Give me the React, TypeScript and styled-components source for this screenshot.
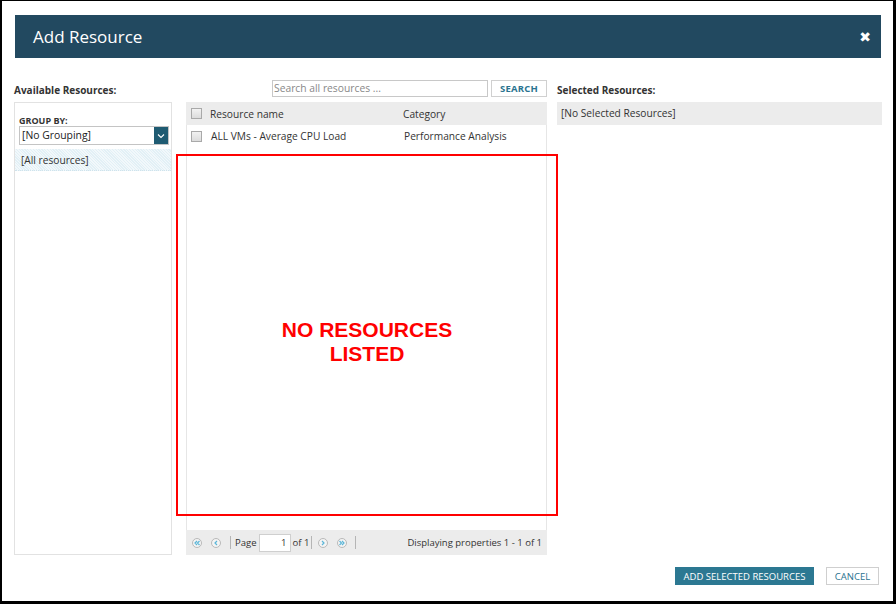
import React from "react";
import styled, { createGlobalStyle } from "styled-components";

const Global = createGlobalStyle`
  html, body { margin: 0; padding: 0; background: #fff; }
  body { font-family: "Open Sans", "Noto Sans", sans-serif; color: #333; }
  * { box-sizing: border-box; }
`;

const Frame = styled.div`
  position: relative;
  width: 896px;
  height: 604px;
  border-style: solid;
  border-color: #000;
  border-width: 1px 3px 3px 2px;
  background: #fff;
  display: flex;
  flex-direction: column;
`;

const Header = styled.div`
  margin: 14px 12px 0 13px;
  height: 43px;
  background: #224960;
  display: flex;
  align-items: center;
  justify-content: space-between;
  padding: 0 10px 0 18px;
`;

const Title = styled.div`
  color: #fff;
  font-size: 17px;
  font-weight: 400;
`;

const Close = styled.div`
  color: #fff;
  font-family: "DejaVu Sans", sans-serif;
  font-size: 14px;
  font-weight: bold;
`;

const Body = styled.div`
  display: flex;
  padding: 22px 0 0 12px;
  gap: 10px;
`;

const LeftCol = styled.div`
  width: 533px;
  display: flex;
  flex-direction: column;
  gap: 5px;
`;

const RightCol = styled.div`
  width: 325px;
  display: flex;
  flex-direction: column;
  gap: 5px;
`;

const TopRow = styled.div`
  height: 17px;
  display: flex;
  align-items: center;
  gap: 3px;
`;

const Label = styled.div`
  font-size: 10px;
  font-weight: 700;
  color: #333;
  padding-top: 3px;
  flex: 1;
`;

const SearchInput = styled.div`
  width: 216px;
  height: 17px;
  border: 1px solid #c8c8c8;
  font-size: 10.3px;
  color: #888;
  padding: 0 0 0 1px;
  line-height: 15px;
`;

const SearchButton = styled.div`
  width: 56px;
  height: 17px;
  border: 1px solid #d0d0d0;
  color: #2a7390;
  font-size: 9.5px;
  font-weight: 700;
  display: flex;
  align-items: center;
  justify-content: center;
  letter-spacing: 0.2px;
`;

const Panels = styled.div`
  display: flex;
  gap: 14px;
  height: 453px;
`;

const GroupPanel = styled.div`
  width: 158px;
  border: 1px solid #e2e2e2;
  display: flex;
  flex-direction: column;
`;

const GroupLabel = styled.div`
  font-size: 9px;
  line-height: 11px;
  font-weight: 700;
  color: #333;
  margin: 12px 0 0 4px;
`;

const Select = styled.div`
  margin: 0 0 0 4px;
  width: 150px;
  height: 19px;
  border: 1px solid #c4c4c4;
  display: flex;
  align-items: stretch;
`;

const SelectText = styled.div`
  flex: 1;
  font-size: 10.4px;
  line-height: 17px;
  padding-left: 2px;
  color: #222;
`;

const SelectArrow = styled.div`
  width: 14px;
  background: #1f5b72;
  display: flex;
  align-items: center;
  justify-content: center;
`;

const GroupItem = styled.div`
  margin-top: 4px;
  height: 22px;
  background-color: #e2f0f6;
  background-image: repeating-linear-gradient(
    45deg,
    rgba(255, 255, 255, 0.55) 0px,
    rgba(255, 255, 255, 0.55) 1px,
    transparent 1px,
    transparent 2px
  );
  border-bottom: 1px dotted #cfe3ec;
  font-size: 10.2px;
  color: #333;
  padding-left: 6px;
  line-height: 22px;
`;

const Grid = styled.div`
  width: 361px;
  display: flex;
  flex-direction: column;
`;

const GridHead = styled.div`
  height: 23px;
  background: #ececec;
  display: flex;
  align-items: center;
`;

const GridRow = styled.div`
  height: 22px;
  display: flex;
  align-items: center;
`;

const GridBody = styled.div`
  flex: 1;
  border-right: 1px solid #e6e6e6;
  border-left: 1px solid #e6e6e6;
  display: flex;
  flex-direction: column;
`;

const CheckCell = styled.div<{ $inset?: number }>`
  width: 24px;
  display: flex;
  justify-content: flex-start;
  padding-left: ${(p) => p.$inset ?? 5}px;
`;

const Check = styled.div`
  width: 11px;
  height: 11px;
  border: 1px solid #a9a9a9;
  background: linear-gradient(#f2f2f2, #dcdcdc);
`;

const Cell = styled.div<{ $w?: number }>`
  width: ${(p) => (p.$w ? `${p.$w}px` : "auto")};
  flex: ${(p) => (p.$w ? "none" : 1)};
  font-size: 10.2px;
  color: #333;
  white-space: nowrap;
`;

const Pager = styled.div`
  height: 25px;
  background: #ececec;
  display: flex;
  align-items: center;
  padding-left: 6px;
  font-size: 9.5px;
  color: #333;
`;

const PageIcon = styled.div<{ $after?: number }>`
  width: 10px;
  height: 10px;
  border-radius: 50%;
  border: 1px solid #b9b9b9;
  background: #f4f4f4;
  display: flex;
  align-items: center;
  justify-content: center;
  margin-right: ${(p) => p.$after ?? 9}px;
`;

const Sep = styled.div<{ $before?: number; $after?: number }>`
  width: 1px;
  height: 13px;
  background: #b5b5b5;
  margin-left: ${(p) => p.$before ?? 0}px;
  margin-right: ${(p) => p.$after ?? 4}px;
`;

const PageInput = styled.div`
  width: 32px;
  height: 18px;
  border: 1px solid #cfcfcf;
  background: #fff;
  text-align: right;
  padding-right: 3px;
  line-height: 16px;
  margin: 0 2px 0 2px;
`;

const Displaying = styled.div`
  margin-left: auto;
  padding-right: 5px;
`;

const SelHead = styled.div`
  height: 23px;
  background: #ececec;
  font-size: 10.2px;
  color: #333;
  padding-left: 4px;
  line-height: 23px;
`;

const Footer = styled.div`
  display: flex;
  justify-content: flex-end;
  gap: 12px;
  padding: 12px 14px 0 0;
`;

const PrimaryButton = styled.div`
  width: 139px;
  height: 18px;
  background: #2c7892;
  color: #fff;
  font-size: 9.5px;
  display: flex;
  align-items: center;
  justify-content: center;
`;

const SecondaryButton = styled.div`
  width: 53px;
  height: 18px;
  border: 1px solid #cfcfcf;
  color: #2a7390;
  font-size: 9.5px;
  display: flex;
  align-items: center;
  justify-content: center;
`;

const Overlay = styled.div`
  position: absolute;
  left: 174px;
  top: 153px;
  width: 382px;
  height: 362px;
  border: 2px solid #ff0000;
  display: flex;
  align-items: center;
  justify-content: center;
  pointer-events: none;
`;

const OverlayText = styled.div`
  color: #ff0000;
  font-family: "Liberation Sans", Arial, sans-serif;
  font-weight: 700;
  font-size: 21px;
  line-height: 24px;
  text-align: center;
  margin-left: 0px;
  margin-top: 13px;
`;

const Chevron = ({ d }: { d: string }) => (
  <svg width="8" height="8" viewBox="0 0 8 8">
    <path d={d} fill="none" stroke="#5bb6d8" strokeWidth="1.2" />
  </svg>
);

export default function App() {
  return (
    <>
      <Global />
      <Frame>
        <Header>
          <Title>Add Resource</Title>
          <Close>✖</Close>
        </Header>
        <Body>
          <LeftCol>
            <TopRow>
              <Label>Available Resources:</Label>
              <SearchInput>Search all resources ...</SearchInput>
              <SearchButton>SEARCH</SearchButton>
            </TopRow>
            <Panels>
              <GroupPanel>
                <GroupLabel>GROUP BY:</GroupLabel>
                <Select>
                  <SelectText>[No Grouping]</SelectText>
                  <SelectArrow>
                    <svg width="8" height="6" viewBox="0 0 8 6">
                      <path d="M1 1.5 L4 4.5 L7 1.5" fill="none" stroke="#fff" strokeWidth="1.1" />
                    </svg>
                  </SelectArrow>
                </Select>
                <GroupItem>[All resources]</GroupItem>
              </GroupPanel>
              <Grid>
                <GridHead>
                  <CheckCell><Check /></CheckCell>
                  <Cell $w={193}>Resource name</Cell>
                  <Cell>Category</Cell>
                </GridHead>
                <GridBody>
                  <GridRow>
                    <CheckCell $inset={4}><Check /></CheckCell>
                    <Cell $w={193}>ALL VMs - Average CPU Load</Cell>
                    <Cell>Performance Analysis</Cell>
                  </GridRow>
                </GridBody>
                <Pager>
                  <PageIcon><Chevron d="M4 2 L2 4 L4 6 M6.5 2 L4.5 4 L6.5 6" /></PageIcon>
                  <PageIcon><Chevron d="M5 2 L3 4 L5 6" /></PageIcon>
                  <Sep />
                  <span>Page</span>
                  <PageInput>1</PageInput>
                  <span>of 1</span>
                  <Sep $before={2} $after={6} />
                  <PageIcon><Chevron d="M3 2 L5 4 L3 6" /></PageIcon>
                  <PageIcon $after={8}><Chevron d="M1.5 2 L3.5 4 L1.5 6 M4 2 L6 4 L4 6" /></PageIcon>
                  <Sep />
                  <Displaying>Displaying properties 1 - 1 of 1</Displaying>
                </Pager>
              </Grid>
            </Panels>
          </LeftCol>
          <RightCol>
            <TopRow>
              <Label>Selected Resources:</Label>
            </TopRow>
            <SelHead>[No Selected Resources]</SelHead>
          </RightCol>
        </Body>
        <Footer>
          <PrimaryButton>ADD SELECTED RESOURCES</PrimaryButton>
          <SecondaryButton>CANCEL</SecondaryButton>
        </Footer>
        <Overlay>
          <OverlayText>
            NO RESOURCES
            <br />
            LISTED
          </OverlayText>
        </Overlay>
      </Frame>
    </>
  );
}
